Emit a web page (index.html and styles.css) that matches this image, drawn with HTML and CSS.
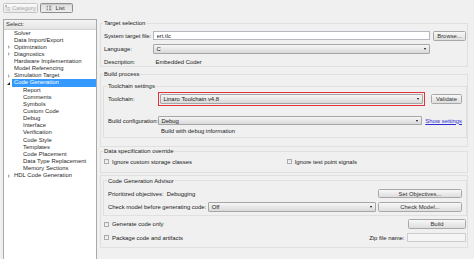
FILE: index.html
```html
<!DOCTYPE html>
<html lang="en">
<head>
    <meta charset="UTF-8">
    <title>Configuration Parameters: Code Generation</title>
    <link rel="stylesheet" href="styles.css">
</head>
<body>
    <div class="toolbar">
        <button class="tool-btn category">
            <svg class="tool-icon" width="5" height="6" viewBox="0 0 5 6">
                <rect x="0" y="0" width="2" height="2" fill="#b8b8b8"/>
                <rect x="2.5" y="2" width="2.5" height="1.5" fill="#c8c8c8"/>
                <rect x="2.5" y="4.3" width="2.5" height="1.5" fill="#c8c8c8"/>
                <path d="M1 2 V5 H2.5 M1 2.7 H2.5" stroke="#c0c0c0" stroke-width="0.6" fill="none"/>
            </svg>
            Category
        </button>
        <button class="tool-btn list">
            <svg class="tool-icon" width="6" height="6" viewBox="0 0 6 6">
                <rect x="0" y="0" width="6" height="6" fill="#e8e8e8" stroke="#a0a0a0" stroke-width="0.6"/>
                <path d="M1 1.5 H2 M3 1.5 H5 M1 3 H2 M3 3 H5 M1 4.5 H2 M3 4.5 H5" stroke="#707070" stroke-width="0.7"/>
            </svg>
            List
        </button>
    </div>

    <div class="main">
        <div class="tree-panel">
            <div class="tree-header">Select:</div>
            <ul class="tree">
                <li><span class="twisty"></span><span class="node">Solver</span></li>
                <li><span class="twisty"></span><span class="node">Data Import/Export</span></li>
                <li><span class="twisty closed"></span><span class="node">Optimization</span></li>
                <li><span class="twisty closed"></span><span class="node">Diagnostics</span></li>
                <li><span class="twisty"></span><span class="node">Hardware Implementation</span></li>
                <li><span class="twisty"></span><span class="node">Model Referencing</span></li>
                <li><span class="twisty closed"></span><span class="node">Simulation Target</span></li>
                <li><span class="twisty open"></span><span class="node selected">Code Generation</span></li>
                <li class="child"><span class="twisty"></span><span class="node">Report</span></li>
                <li class="child"><span class="twisty"></span><span class="node">Comments</span></li>
                <li class="child"><span class="twisty"></span><span class="node">Symbols</span></li>
                <li class="child"><span class="twisty"></span><span class="node">Custom Code</span></li>
                <li class="child"><span class="twisty"></span><span class="node">Debug</span></li>
                <li class="child"><span class="twisty"></span><span class="node">Interface</span></li>
                <li class="child"><span class="twisty"></span><span class="node">Verification</span></li>
                <li class="child"><span class="twisty"></span><span class="node">Code Style</span></li>
                <li class="child"><span class="twisty"></span><span class="node">Templates</span></li>
                <li class="child"><span class="twisty"></span><span class="node">Code Placement</span></li>
                <li class="child"><span class="twisty"></span><span class="node">Data Type Replacement</span></li>
                <li class="child"><span class="twisty"></span><span class="node">Memory Sections</span></li>
                <li><span class="twisty closed"></span><span class="node">HDL Code Generation</span></li>
            </ul>
        </div>

        <div class="settings">
            <fieldset class="group target">
                <legend>Target selection</legend>
                <div class="row">
                    <span class="label target-label">System target file:</span>
                    <input class="field target-field" type="text" value="ert.tlc">
                    <button class="btn browse">Browse...</button>
                </div>
                <div class="row">
                    <span class="label target-label">Language:</span>
                    <div class="combo target-field"><span>C</span><i class="caret"></i></div>
                </div>
                <div class="row">
                    <span class="label target-label">Description:</span>
                    <span class="value">Embedded Coder</span>
                </div>
            </fieldset>

            <fieldset class="group build">
                <legend>Build process</legend>
                <fieldset class="subgroup toolchain">
                    <legend>Toolchain settings</legend>
                    <div class="row tall">
                        <span class="label tool-label">Toolchain:</span>
                        <div class="highlight">
                            <div class="combo"><span>Linaro Toolchain v4.8</span><i class="caret"></i></div>
                        </div>
                        <button class="btn validate">Validate</button>
                    </div>
                    <div class="row config">
                        <span class="label tool-label">Build configuration:</span>
                        <div class="combo config-combo"><span>Debug</span><i class="caret"></i></div>
                        <a class="link" href="#">Show settings</a>
                    </div>
                    <div class="row note">Build with debug information</div>
                </fieldset>
            </fieldset>

            <fieldset class="group dataspec">
                <legend>Data specification override</legend>
                <div class="row checks">
                    <label class="check-item wide-item"><span class="check"></span>Ignore custom storage classes</label>
                    <label class="check-item"><span class="check"></span>Ignore test point signals</label>
                </div>
            </fieldset>

            <div class="group plain">
                <fieldset class="subgroup advisor">
                    <legend>Code Generation Advisor</legend>
                    <div class="row advisor-row first">
                        <span class="label objectives-label">Prioritized objectives:</span>
                        <span class="value">Debugging</span>
                        <button class="btn wide-btn">Set Objectives...</button>
                    </div>
                    <div class="row advisor-row">
                        <span class="label">Check model before generating code:</span>
                        <div class="combo check-combo"><span>Off</span><i class="caret"></i></div>
                        <button class="btn wide-btn">Check Model...</button>
                    </div>
                </fieldset>
                <div class="row gen-row">
                    <label class="check-item"><span class="check"></span>Generate code only</label>
                    <button class="btn build-btn">Build</button>
                </div>
                <div class="row zip-row">
                    <label class="check-item"><span class="check"></span>Package code and artifacts</label>
                    <span class="zip-label">Zip file name:</span>
                    <input class="field zip-field" type="text" value="" disabled>
                </div>
            </div>
        </div>
    </div>
</body>
</html>
```

FILE: styles.css
```css
* {
    box-sizing: border-box;
}

body {
    margin: 0;
    width: 474px;
    height: 259px;
    overflow: hidden;
    background-color: #f0f0f0;
    font-family: 'Liberation Sans', Arial, sans-serif;
    font-size: 5.9px;
    color: #1a1a1a;
}

/* top toolbar */

.toolbar {
    display: flex;
    gap: 2px;
    height: 18px;
    padding: 2.5px 0 0 3px;
}

.tool-btn {
    display: flex;
    align-items: center;
    height: 10.5px;
    padding: 0;
    font: inherit;
    border: 1px solid #c4c4c4;
    border-radius: 1.5px;
    background: linear-gradient(#fbfbfb, #e9e9e9);
    color: #a8a8a8;
}

.tool-btn.category {
    width: 35px;
    padding-left: 1px;
    gap: 2px;
}

.tool-btn.list {
    width: 33px;
    padding-left: 5px;
    gap: 3.5px;
    color: #333;
    border-color: #8f8f8f;
    background: linear-gradient(#e2e2e2, #ececec);
    box-shadow: inset 0 1px 1px rgba(0, 0, 0, 0.12);
}

/* left tree */

.main {
    display: flex;
    gap: 2px;
    height: 241px;
    padding-left: 3px;
}

.tree-panel {
    width: 94px;
    height: 250px;
    margin-top: 1px;
    border: 1px solid #a9a9a9;
    background-color: white;
}

.tree-header {
    height: 9.5px;
    line-height: 9px;
    padding-left: 2px;
    background: linear-gradient(#f4f4f4, #e4e4e4);
    border-bottom: 1px solid #d2d2d2;
    color: #333;
}

.tree {
    list-style: none;
    margin: 0;
    padding: 0;
}

.tree li {
    display: flex;
    align-items: center;
    height: 7.15px;
    line-height: 7.15px;
    color: #2a2a2a;
}

.tree li.child .twisty {
    margin-left: 9px;
}

.twisty {
    display: flex;
    align-items: center;
    justify-content: center;
    width: 8px;
    height: 100%;
}

.twisty.closed::before {
    content: '';
    border-left: 2.5px solid #b0b0b0;
    border-top: 2px solid transparent;
    border-bottom: 2px solid transparent;
    margin-left: 1px;
}

.twisty.open::before {
    content: '';
    border-bottom: 3px solid #222;
    border-left: 3px solid transparent;
    margin-left: 1px;
}

.node {
    flex: 1;
    padding-left: 2px;
    white-space: nowrap;
}

.node.selected {
    background-color: #3399ff;
    color: white;
}

/* settings area */

.settings {
    width: 370px;
    padding-top: 1.3px;
}

.group {
    min-width: 0;
    margin: 0 1px;
    padding: 0 1px 0 3px;
    border: 1px solid #e0e0e0;
}

legend {
    padding: 0 1px;
    margin-left: -1px;
    line-height: 8px;
}

.subgroup {
    min-width: 0;
    margin: 0 -1px;
    padding: 0 4px 2px 4px;
    border: 1px solid #e0e0e0;
}

.row {
    display: flex;
    align-items: center;
    height: 9px;
    white-space: nowrap;
}

.label {
    flex-shrink: 0;
}

.value {
    padding-left: 2.5px;
}

.target {
    padding-top: 4px;
}

.target .row + .row {
    margin-top: 4px;
}

.target-label {
    width: 49px;
}

.target-field {
    width: 277px;
}

.field {
    height: 9px;
    padding: 0 2.5px;
    font: inherit;
    color: #1a1a1a;
    background-color: white;
    border: 1px solid #b5b8bf;
    outline: none;
}

.combo {
    display: flex;
    align-items: center;
    height: 9.5px;
    padding-left: 2.5px;
    border: 1px solid #a6a6a6;
    border-radius: 1px;
    background: linear-gradient(#f6f6f6, #d9d9d9);
}

.caret {
    margin-left: auto;
    margin-right: 3px;
    border-left: 1.5px solid transparent;
    border-right: 1.5px solid transparent;
    border-top: 2px solid #111;
}

.btn {
    height: 9.5px;
    padding: 0;
    font: inherit;
    color: #333;
    border: 1px solid #a8a8a8;
    border-radius: 1.5px;
    background: linear-gradient(#f8f8f8, #dedede);
}

.browse {
    width: 33px;
    margin-left: 3px;
}

/* build process */

.build {
    margin-top: 3px;
    padding-bottom: 8px;
}

.toolchain {
    margin-top: 4px;
}

.tool-label {
    width: 50px;
}

.row.tall {
    height: 14px;
    margin-top: 1.5px;
}

.highlight {
    width: 266.5px;
    height: 14px;
    padding: 1px;
    border: 1px solid #e3323c;
}

.highlight .combo {
    height: 100%;
}

.validate {
    width: 31px;
    margin-left: auto;
}

.row.config {
    height: 9.5px;
    margin-top: 10px;
}

.config-combo {
    width: 265px;
}

.link {
    margin-left: 3px;
    color: #2d2dd2;
}

.row.note {
    height: 8px;
    margin-top: 2px;
    padding-left: 53px;
}

/* data specification */

.dataspec {
    padding-top: 2.7px;
    padding-bottom: 6px;
}

.row.checks {
    height: 8px;
}

.check-item {
    display: flex;
    align-items: center;
}

.wide-item {
    width: 182.7px;
}

.check {
    width: 5px;
    height: 5px;
    margin-right: 3px;
    border: 1px solid #ababab;
    background: linear-gradient(#e4e4e4, #fafafa);
}

/* advisor and build */

.plain {
    margin-top: 2px;
    padding-bottom: 5px;
}

.advisor {
    margin-top: 1px;
    padding-bottom: 3px;
}

.advisor-row {
    height: 9.5px;
    margin-top: 3.7px;
}

.advisor-row.first {
    margin-top: 4px;
}

.objectives-label {
    width: 56.2px;
}

.check-combo {
    width: 168px;
    margin-left: 2px;
}

.wide-btn {
    width: 84px;
    margin-left: auto;
}

.gen-row {
    height: 10px;
    margin-top: 3.6px;
}

.build-btn {
    width: 58px;
    height: 10px;
    margin-left: auto;
}

.zip-row {
    height: 9.5px;
    margin-top: 3.7px;
}

.zip-label {
    margin-left: auto;
}

.zip-field {
    width: 59px;
    height: 9.5px;
    margin-left: 2.5px;
    background-color: #f5f5f5;
    border-color: #cdcdcd;
}
```
